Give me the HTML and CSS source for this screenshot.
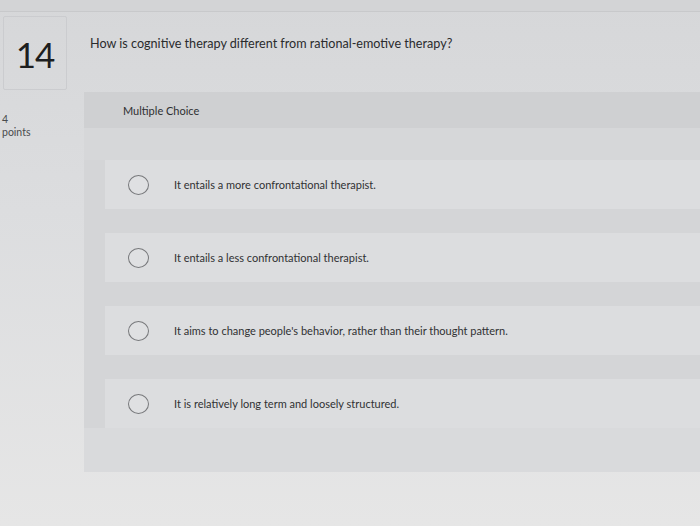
FILE: index.html
```html
<!DOCTYPE html>
<html>
<head>
<meta charset="utf-8">
<link rel="stylesheet" href="styles.css">
</head>
<body>
<div class="topbar"></div>
<div class="main">
  <div class="side">
    <div class="qnum">14</div>
    <div class="points"><span class="pts-num">4</span><span class="pts-label">points</span></div>
  </div>
  <div class="content">
    <div class="question">How is cognitive therapy different from rational-emotive therapy?</div>
    <div class="panel">
      <div class="panel-head">Multiple Choice</div>
      <div class="panel-band"></div>
      <div class="options">
        <div class="option"><span class="radio"></span><span class="label">It entails a more confrontational therapist.</span></div>
        <div class="option"><span class="radio"></span><span class="label">It entails a less confrontational therapist.</span></div>
        <div class="option"><span class="radio"></span><span class="label">It aims to change people's behavior, rather than their thought pattern.</span></div>
        <div class="option"><span class="radio"></span><span class="label">It is relatively long term and loosely structured.</span></div>
      </div>
      <div class="panel-foot"></div>
    </div>
  </div>
</div>
</body>
</html>
```
FILE: styles.css
```css
html, body {
  margin: 0;
  padding: 0;
}
body {
  width: 700px;
  height: 526px;
  overflow: hidden;
  font-family: "Lato", "Open Sans", sans-serif;
  color: #2e2f31;
  background: linear-gradient(to bottom, #d6d7d9 0%, #dcdddf 40%, #e6e6e6 100%);
}
.topbar {
  height: 11px;
  background: #d3d4d6;
  border-bottom: 1px solid #c8c9cb;
}
.main {
  display: flex;
}
.side {
  width: 84px;
  flex: none;
}
.qnum {
  margin: 4px 0 0 3px;
  width: 64px;
  height: 74px;
  border: 1px solid #cbcccf;
  border-radius: 2px;
  box-sizing: border-box;
  display: flex;
  align-items: center;
  justify-content: center;
  font-size: 35px;
  letter-spacing: -1px;
  color: #1d1e20;
  padding-top: 2px;
}
.points {
  margin: 23px 0 0 2px;
  display: flex;
  flex-direction: column;
  font-size: 10.5px;
  line-height: 13px;
  color: #4a4b4d;
}
.content {
  flex: 1;
  display: flex;
  flex-direction: column;
}
.question {
  padding: 24px 0 0 6px;
  height: 57px;
  box-sizing: border-box;
  font-size: 12.6px;
  color: #2a2b2d;
}
.panel {
  margin-top: 23px;
  background: #d2d3d5;
  display: flex;
  flex-direction: column;
}
.panel-head {
  height: 36px;
  padding: 12px 0 0 39px;
  box-sizing: border-box;
  font-size: 11px;
  color: #2e2f31;
  background: #cfd0d2;
}
.panel-band {
  height: 32px;
  background: #d6d7d9;
}
.options {
  display: flex;
  flex-direction: column;
  gap: 24px;
  padding-left: 21px;
  background: #d4d5d7;
}
.option {
  height: 49px;
  display: flex;
  align-items: center;
  padding-left: 23px;
  background: #dcdddf;
}
.radio {
  width: 21px;
  height: 20px;
  border: 1.5px solid #77787b;
  border-radius: 50%;
  box-sizing: border-box;
  flex: none;
  background: #dfe0e2;
}
.label {
  margin-left: 25px;
  font-size: 11px;
  color: #303133;
}
.panel-foot {
  height: 44px;
  background: #d9dadc;
}
```
